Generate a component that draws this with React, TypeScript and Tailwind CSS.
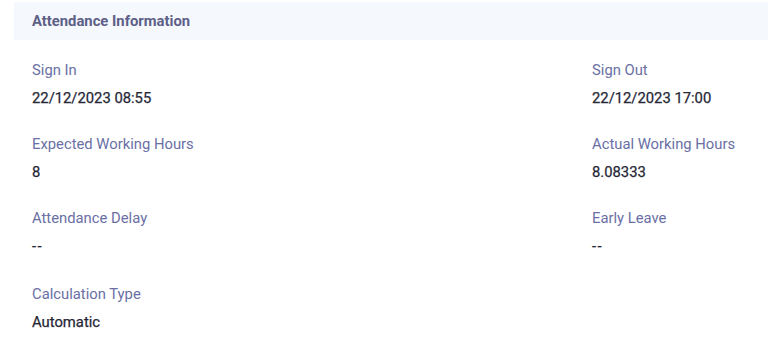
import React from "react";

const rows: [string, string][][] = [
  [["Sign In", "22/12/2023 08:55"], ["Sign Out", "22/12/2023 17:00"]],
  [["Expected Working Hours", "8"], ["Actual Working Hours", "8.08333"]],
  [["Attendance Delay", "--"], ["Early Leave", "--"]],
  [["Calculation Type", "Automatic"]],
];

function Field({ label, value }: { label: string; value: string }) {
  return (
    <div className="flex flex-col gap-[8px]">
      <div className="text-[14.8px] leading-[20px] text-[#6a6fa5]">{label}</div>
      <div className={`text-[14.8px] leading-[20px] font-normal text-[#262736] [-webkit-text-stroke:0.25px_#262736] ${value === "--" ? "tracking-[1.5px] text-[#55586e]" : ""}`}>{value}</div>
    </div>
  );
}

export default function App() {
  return (
    <div className="w-[768px] h-[358px] bg-white pt-[2px] pl-[14px]" style={{ fontFamily: "Roboto, 'Liberation Sans', sans-serif" }}>
      <div className="h-[38px] bg-[#f5f8fc] flex items-center pl-[18px]">
        <span className="text-[14.8px] font-bold text-[#5d6087]">Attendance Information</span>
      </div>
      <div className="pl-[18px] pt-[20px] flex flex-col gap-[26px]">
        {rows.map((r, i) => (
          <div key={i} className={`grid grid-cols-[560px_1fr] ${i === 3 ? "mt-[2px]" : ""}`}>
            {r.map(([l, v]) => (
              <Field key={l} label={l} value={v} />
            ))}
          </div>
        ))}
      </div>
    </div>
  );
}
